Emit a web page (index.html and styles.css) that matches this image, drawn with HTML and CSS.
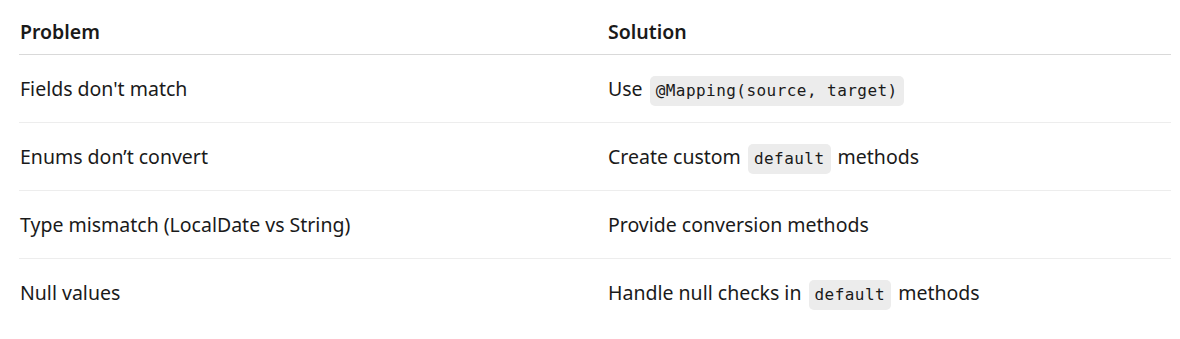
FILE: index.html
```html
<!DOCTYPE html>
<html>
<head>
<meta charset="utf-8">
<link rel="stylesheet" href="styles.css">
</head>
<body>
<div class="table">
  <div class="row head">
    <div class="cell">Problem</div>
    <div class="cell">Solution</div>
  </div>
  <div class="row">
    <div class="cell">Fields don't match</div>
    <div class="cell">Use <code>@Mapping(source, target)</code></div>
  </div>
  <div class="row">
    <div class="cell">Enums don’t convert</div>
    <div class="cell">Create custom <code>default</code> methods</div>
  </div>
  <div class="row">
    <div class="cell">Type mismatch (LocalDate vs String)</div>
    <div class="cell">Provide conversion methods</div>
  </div>
  <div class="row last">
    <div class="cell">Null values</div>
    <div class="cell">Handle null checks in <code>default</code> methods</div>
  </div>
</div>
</body>
</html>
```
FILE: styles.css
```css
html, body {
  margin: 0;
  background: #ffffff;
}
body {
  font-family: "Noto Sans", "Open Sans", sans-serif;
  font-size: 19.5px;
  color: #1a1a1a;
  padding: 8px 9px 0 19px;
}
.table {
  display: flex;
  flex-direction: column;
}
.row {
  display: grid;
  grid-template-columns: 588px 1fr;
  align-items: center;
  height: 67px;
  border-bottom: 1px solid #ededed;
}
.row.head {
  height: 46px;
  font-weight: 600;
  border-bottom: 1px solid #d9d9d9;
}
.row.last {
  border-bottom: none;
}
.cell {
  padding-left: 1px;
  white-space: nowrap;
}
code {
  font-family: "DejaVu Sans Mono", monospace;
  font-size: 16px;
  letter-spacing: 0.45px;
  background: #ececec;
  border-radius: 5px;
  padding: 5px 6px 6px 6px;
  margin: 0 2px;
}
```
